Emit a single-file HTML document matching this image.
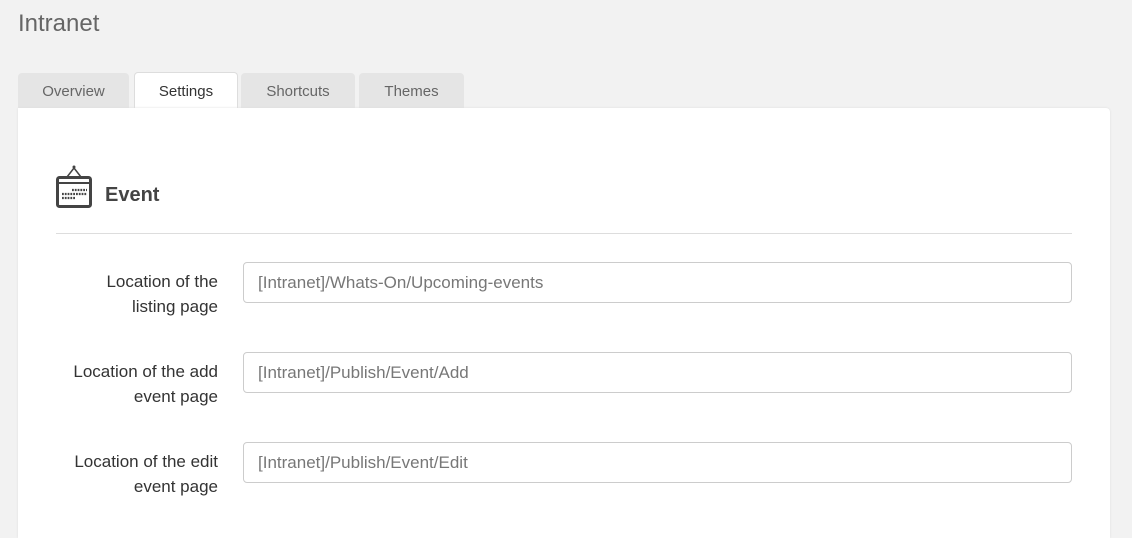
<!DOCTYPE html>
<html><head><style>
body{margin:0;width:1132px;height:517px;background:#f2f2f2;font-family:"Liberation Sans",sans-serif;position:relative;overflow:hidden}
h1{position:absolute;left:18px;top:10px;margin:0;font-weight:normal;font-size:24px;color:#666}
.tab{position:absolute;top:73px;height:35px;background:#e5e5e5;border-radius:4px 4px 0 0;color:#666;font-size:15px;text-align:center;line-height:37px}
.tab.a{background:#fff;top:72px;height:37px;color:#333;border:1px solid #ddd;border-bottom:none;box-sizing:border-box;line-height:37px}
.panel{position:absolute;left:18px;top:108px;width:1092px;height:430px;background:#fff;border-radius:0 4px 0 0;box-shadow:0 0 2px #ddd}
.ttl{position:absolute;left:105px;top:184px;font-size:20px;font-weight:bold;color:#444}
.rule{position:absolute;left:56px;top:233px;width:1016px;height:1px;background:#ddd}
.lbl{position:absolute;right:914px;text-align:right;font-size:17px;color:#333;line-height:25px}
.in{position:absolute;left:243px;width:829px;height:41px;box-sizing:border-box;border:1px solid #ccc;border-radius:4px;font-size:17px;color:#777;padding-left:14px;line-height:39px}
</style></head><body>
<h1>Intranet</h1>
<div class="tab" style="left:18px;width:111px">Overview</div>
<div class="tab a" style="left:134px;width:104px">Settings</div>
<div class="tab" style="left:241px;width:114px">Shortcuts</div>
<div class="tab" style="left:359px;width:105px">Themes</div>
<div class="panel"></div>
<svg style="position:absolute;left:54px;top:163px" width="42" height="46" viewBox="0 0 42 46">
<rect x="3.5" y="14.5" width="33" height="29" rx="2" fill="none" stroke="#444" stroke-width="3"/>
<line x1="3" y1="20" x2="37" y2="20" stroke="#444" stroke-width="2"/>
<path d="M13 14 L20 5 L27 14" fill="none" stroke="#444" stroke-width="1.5"/>
<circle cx="20" cy="4" r="1.5" fill="#444"/>
<g stroke="#444" stroke-width="2.2" stroke-dasharray="1.8 1">
<line x1="18" y1="27" x2="33" y2="27"/><line x1="8" y1="31" x2="33" y2="31"/><line x1="8" y1="35" x2="22" y2="35"/></g>
</svg>
<div class="ttl">Event</div>
<div class="rule"></div>
<div class="lbl" style="top:269px">Location of the<br>listing page</div>
<div class="in" style="top:262px">[Intranet]/Whats-On/Upcoming-events</div>
<div class="lbl" style="top:359px">Location of the add<br>event page</div>
<div class="in" style="top:352px">[Intranet]/Publish/Event/Add</div>
<div class="lbl" style="top:449px">Location of the edit<br>event page</div>
<div class="in" style="top:442px">[Intranet]/Publish/Event/Edit</div>
</body></html>
